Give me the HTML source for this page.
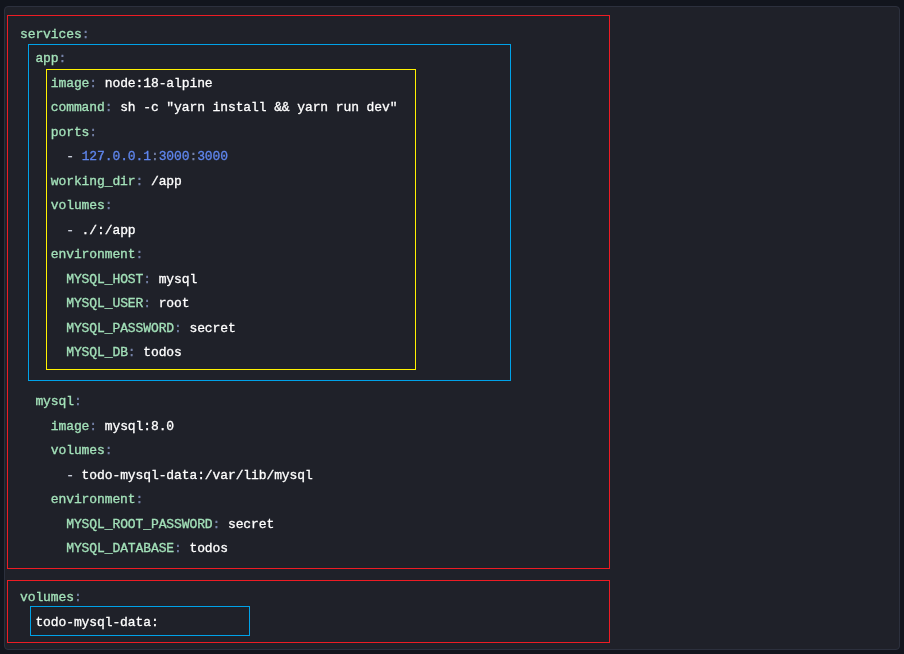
<!DOCTYPE html>
<html><head><meta charset="utf-8">
<style>
html,body{margin:0;padding:0;}
body{width:904px;height:654px;background:#12151d;position:relative;overflow:hidden;font-family:"Liberation Mono",monospace;}
#box{position:absolute;left:4px;top:6px;width:894px;height:642px;border:1px solid #2c303d;border-radius:4px;background:#1f2129;}
pre{position:absolute;left:20px;top:22px;padding-top:0.75px;will-change:transform;margin:0;font-family:"Liberation Mono",monospace;font-size:13px;letter-spacing:-0.1px;line-height:24.5px;color:#ffffff;white-space:pre;-webkit-text-stroke:0.3px currentColor;}
.k{color:#a3e1b9}
.p{color:#7683a9}
.n{color:#5f86ee}
.d{color:#d6dae6}
.r{position:absolute;box-sizing:border-box;border:1px solid;}
</style></head><body>
<div id="box"></div>
<div class="r" style="left:7px;top:15px;width:603px;height:554px;border-color:#ed1c24"></div>
<div class="r" style="left:7px;top:580px;width:603px;height:63px;border-color:#ed1c24"></div>
<div class="r" style="left:28px;top:44px;width:483px;height:337px;border-color:#00a2e8"></div>
<div class="r" style="left:30px;top:606px;width:220px;height:30px;border-color:#00a2e8"></div>
<div class="r" style="left:46px;top:69px;width:370px;height:301px;border-color:#fff200"></div>
<pre><span class="k">services</span><span class="p">:</span>
  <span class="k">app</span><span class="p">:</span>
    <span class="k">image</span><span class="p">:</span> node:18-alpine
    <span class="k">command</span><span class="p">:</span> sh -c "yarn install &amp;&amp; yarn run dev"
    <span class="k">ports</span><span class="p">:</span>
      <span class="d">-</span> <span class="n">127.0.0.1</span><span class="p">:</span><span class="n">3000</span><span class="p">:</span><span class="n">3000</span>
    <span class="k">working_dir</span><span class="p">:</span> /app
    <span class="k">volumes</span><span class="p">:</span>
      <span class="d">-</span> ./:/app
    <span class="k">environment</span><span class="p">:</span>
      <span class="k">MYSQL_HOST</span><span class="p">:</span> mysql
      <span class="k">MYSQL_USER</span><span class="p">:</span> root
      <span class="k">MYSQL_PASSWORD</span><span class="p">:</span> secret
      <span class="k">MYSQL_DB</span><span class="p">:</span> todos

  <span class="k">mysql</span><span class="p">:</span>
    <span class="k">image</span><span class="p">:</span> mysql:8.0
    <span class="k">volumes</span><span class="p">:</span>
      <span class="d">-</span> todo-mysql-data:/var/lib/mysql
    <span class="k">environment</span><span class="p">:</span>
      <span class="k">MYSQL_ROOT_PASSWORD</span><span class="p">:</span> secret
      <span class="k">MYSQL_DATABASE</span><span class="p">:</span> todos

<span class="k">volumes</span><span class="p">:</span>
  todo-mysql-data:
</pre>
</body></html>
